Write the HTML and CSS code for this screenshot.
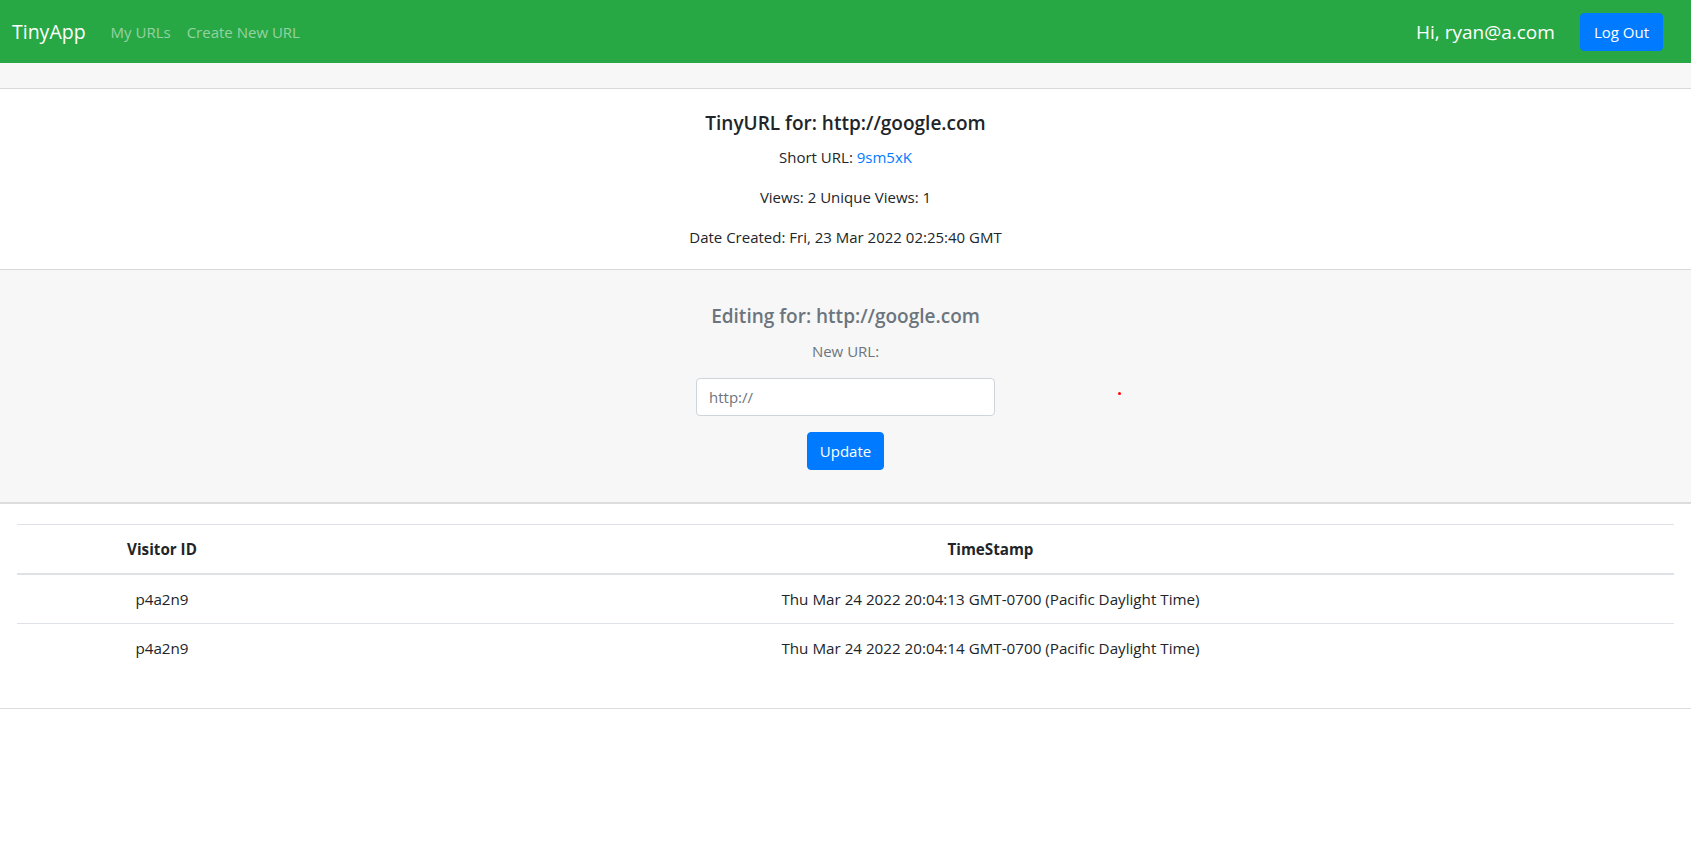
FILE: index.html
```html
<!DOCTYPE html>
<html lang="en">
<head>
<meta charset="utf-8">
<title>TinyApp</title>
<link rel="stylesheet" href="styles.css">
</head>
<body>
<nav class="navbar">
  <a class="brand" href="#">TinyApp</a>
  <div class="nav-links">
    <a class="nav-link" href="#">My URLs</a>
    <a class="nav-link" href="#">Create New URL</a>
  </div>
  <div class="nav-right">
    <span class="greeting">Hi, ryan@a.com</span>
    <button class="btn btn-primary btn-logout" type="button">Log Out</button>
  </div>
</nav>
<main class="card">
  <div class="card-header"></div>
  <section class="info">
    <h5 class="info-title">TinyURL for: http://google.com</h5>
    <p class="info-line">Short URL: <a class="link" href="#">9sm5xK</a></p>
    <p class="info-line">Views: 2 Unique Views: 1</p>
    <p class="info-line">Date Created: Fri, 23 Mar 2022 02:25:40 GMT</p>
  </section>
  <section class="edit">
    <h5 class="edit-title">Editing for: http://google.com</h5>
    <label class="edit-label" for="newurl">New URL:</label>
    <div class="edit-row">
      <input class="form-control" id="newurl" type="text" placeholder="http://">
      <span class="red-dot"></span>
    </div>
    <button class="btn btn-primary btn-update" type="submit">Update</button>
  </section>
  <section class="visits">
    <table class="table">
      <thead>
        <tr><th class="col-id">Visitor ID</th><th>TimeStamp</th></tr>
      </thead>
      <tbody>
        <tr><td>p4a2n9</td><td>Thu Mar 24 2022 20:04:13 GMT-0700 (Pacific Daylight Time)</td></tr>
        <tr><td>p4a2n9</td><td>Thu Mar 24 2022 20:04:14 GMT-0700 (Pacific Daylight Time)</td></tr>
      </tbody>
    </table>
  </section>
</main>
</body>
</html>
```
FILE: styles.css
```css
* { box-sizing: border-box; }
html, body { margin: 0; padding: 0; }
body {
  font-family: "Segoe UI", "Open Sans", "Noto Sans", Arial, sans-serif;
  font-size: 15px;
  line-height: 24px;
  color: #212529;
  background: #fff;
}
a { text-decoration: none; }

.navbar {
  height: 63px;
  background: #28a745;
  display: flex;
  align-items: center;
  padding: 0 28px 0 12px;
}
.brand {
  color: #fff;
  font-size: 19.5px;
  line-height: 30px;
  margin-right: 17px;
}
.nav-links { display: flex; }
.nav-link {
  color: rgba(255,255,255,.5);
  padding: 0 8px;
  font-size: 15px;
}
.nav-right {
  margin-left: auto;
  display: flex;
  align-items: center;
  gap: 25px;
}
.greeting { color: #fff; font-size: 19px; line-height: 30px; }

.btn {
  font-family: inherit;
  font-size: 15px;
  line-height: 24px;
  border: 1px solid transparent;
  border-radius: 4px;
  cursor: pointer;
}
.btn-primary { background: #007bff; border-color: #007bff; color: #fff; }
.btn-logout { height: 38px; padding: 6px 13px; }
.btn-update { height: 38px; padding: 6px 12px; }

.card { border-bottom: 1px solid #dcdcdc; }
.card-header {
  height: 26px;
  background: #f7f7f7;
  border-bottom: 1px solid #d9d9d9;
}

.info {
  text-align: center;
  padding: 22px 20px 4px;
  border-bottom: 1px solid #d9d9d9;
}
.info-title {
  margin: 0 0 10px;
  font-size: 19px;
  line-height: 24px;
  font-weight: 600;
}
.info-line { margin: 0 0 16px; }
.link { color: #007bff; }

.edit {
  background: #f7f7f7;
  border-bottom: 2px solid #dcdcdc;
  display: flex;
  flex-direction: column;
  align-items: center;
  padding: 34px 20px 32px;
  color: #6c757d;
}
.edit-title {
  margin: 0 0 11px;
  font-size: 19px;
  line-height: 24px;
  font-weight: 600;
}
.edit-label { display: block; margin-bottom: 15px; }
.edit-row { position: relative; margin-bottom: 16px; }
.form-control {
  display: block;
  width: 299px;
  height: 38px;
  padding: 6px 12px;
  font-family: inherit;
  font-size: 15px;
  color: #495057;
  background: #fff;
  border: 1px solid #ced4da;
  border-radius: 4px;
}
.form-control::placeholder { color: #6c757d; }
.red-dot {
  position: absolute;
  left: 422px;
  top: 14px;
  width: 3px;
  height: 3px;
  border-radius: 50%;
  background: #f00;
}

.visits { padding: 20px 17px 36px; }
.table {
  width: 100%;
  border-collapse: collapse;
  font-size: 15.2px;
}
.table th, .table td {
  text-align: center;
  padding: 12px;
  border-top: 1px solid #dee2e6;
  vertical-align: top;
}
.table th { font-weight: 700; border-bottom: 2px solid #dee2e6; }
.col-id { width: 290px; }
```
